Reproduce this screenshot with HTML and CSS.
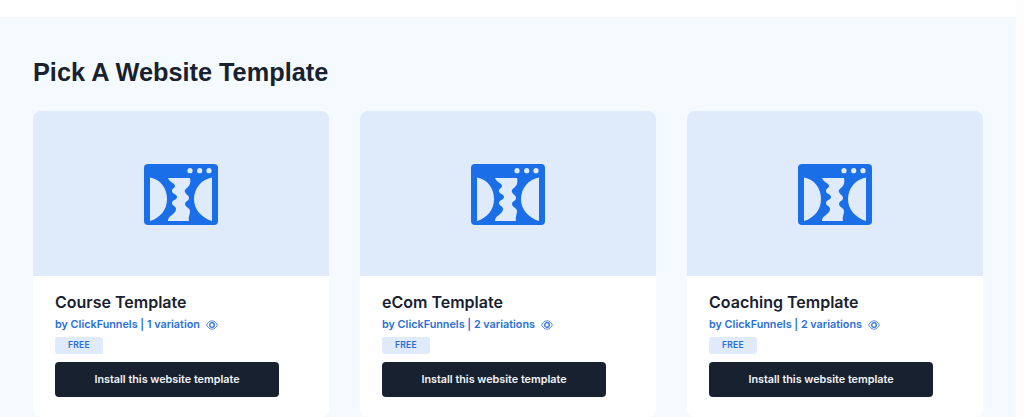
FILE: index.html
```html
<!DOCTYPE html>
<html>
<head>
    <link rel="stylesheet" href="styles.css">
</head>
<body>
    <svg class="defs" width="0" height="0">
        <symbol id="cf-logo" viewBox="0 0 74 61">
            <rect width="74" height="61" rx="4" fill="#1a6fe8"/>
            <g fill="#dfeafb">
                <circle cx="46" cy="6.700" r="2.600"/>
                <circle cx="55.700" cy="6.700" r="2.600"/>
                <circle cx="65" cy="6.700" r="2.600"/>
                <path d="M6 13.500C16 15 23 24 23 35C23 46 16 54 6 57Z"/>
                <path d="M68 13.500C58 15 50 24 50 35C50 46 58 54 68 57Z"/>
                <path d="M24 14H46C47 18 46 21 44 23C42 25 40 26 41 28C42 31 45 31 45 34C45 37 41 37 41 40C41 43 46 44 46 47C46 51 44 53 45 57H24C24 53 27 52 29 50C31 48 32 47 32 45C32 42 28 42 28 39C28 36 33 36 33 33C33 30 28 30 28 27C28 24 31 24 31 22C31 19 25 18 24 14Z"/>
            </g>
        </symbol>
        <symbol id="eye" viewBox="0 0 12 12">
            <g fill="none" stroke="#2a6fd6">
                <path stroke-width=".8" d="M.6 6C2 3.200 3.800 1.800 6 1.800s4 1.400 5.400 4.200C10 8.800 8.200 10.200 6 10.200S2 8.800.6 6Z"/>
                <circle stroke-width="1.300" cx="6" cy="6" r="2.300"/>
            </g>
        </symbol>
    </svg>

    <div class="topbar"></div>
    <main class="content">
        <h1>Pick A Website Template</h1>
        <div class="cards">
            <div class="card">
                <div class="thumb"><svg class="logo"><use href="#cf-logo"/></svg></div>
                <div class="info">
                    <h2>Course Template</h2>
                    <div class="meta">by ClickFunnels | 1 variation <svg class="eye"><use href="#eye"/></svg></div>
                    <span class="badge">FREE</span>
                    <button>Install this website template</button>
                </div>
            </div>
            <div class="card">
                <div class="thumb"><svg class="logo"><use href="#cf-logo"/></svg></div>
                <div class="info">
                    <h2>eCom Template</h2>
                    <div class="meta">by ClickFunnels | 2 variations <svg class="eye"><use href="#eye"/></svg></div>
                    <span class="badge">FREE</span>
                    <button>Install this website template</button>
                </div>
            </div>
            <div class="card">
                <div class="thumb"><svg class="logo"><use href="#cf-logo"/></svg></div>
                <div class="info">
                    <h2>Coaching Template</h2>
                    <div class="meta">by ClickFunnels | 2 variations <svg class="eye"><use href="#eye"/></svg></div>
                    <span class="badge">FREE</span>
                    <button>Install this website template</button>
                </div>
            </div>
        </div>
    </main>
</body>
</html>
```

FILE: styles.css
```css
html, body {
    height: 417px;
    overflow: hidden;
}

body {
    margin: 0;
    background: #fdfdfe;
    font-family: "Inter", "Liberation Sans", sans-serif;
    color: #18212f;
}

.defs {
    display: block;
}

.topbar {
    width: 1016px;
    height: 17px;
    background: #fff;
}

.content {
    width: 1016px;
    height: 400px;
    box-sizing: border-box;
    padding: 0 33px;
    background: #f5faff;
}

h1 {
    margin: 0;
    padding-top: 39px;
    height: 55px;
    font-family: "Liberation Sans", sans-serif;
    font-size: 25.300px;
    line-height: 32px;
    font-weight: 700;
}

.cards {
    display: grid;
    grid-template-columns: repeat(3, 296px);
    gap: 31px;
}

.card {
    background: #fff;
    border-radius: 8px;
    overflow: hidden;
    height: 306px;
}

.thumb {
    height: 165px;
    background: #dfeafb;
    display: flex;
    justify-content: center;
    align-items: center;
}

.logo {
    width: 74px;
    height: 61px;
    margin-top: 1px;
}

.info {
    padding: 17px 22px;
}

h2 {
    margin: 0;
    font-size: 16px;
    line-height: 19px;
    font-weight: 600;
}

.meta {
    display: flex;
    align-items: center;
    gap: 6px;
    margin-top: 5px;
    font-size: 10.800px;
    line-height: 16px;
    font-weight: 600;
    color: #2a6fd6;
}

.eye {
    width: 12px;
    height: 12px;
}

.badge {
    display: block;
    width: 48px;
    height: 17px;
    margin-top: 4px;
    background: #dfeafb;
    border-radius: 3px;
    font-size: 8.500px;
    line-height: 17px;
    font-weight: 600;
    letter-spacing: .3px;
    text-align: center;
    color: #2a6fd6;
}

button {
    display: block;
    width: 224px;
    height: 35px;
    margin-top: 8px;
    background: #18212f;
    color: #f2f4f7;
    border: none;
    border-radius: 4px;
    font-family: inherit;
    font-size: 10.800px;
    font-weight: 600;
}
```
